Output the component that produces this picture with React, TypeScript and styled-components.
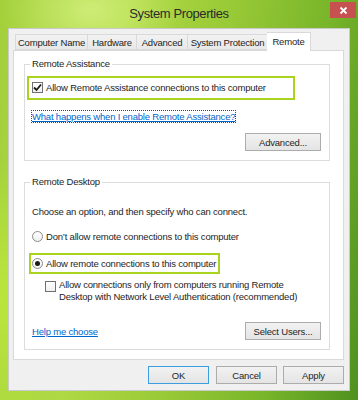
import React from "react";
import styled, { createGlobalStyle } from "styled-components";

const GlobalStyle = createGlobalStyle`
  html, body {
    margin: 0;
    padding: 0;
    font-family: "Liberation Sans", Arial, sans-serif;
    font-size: 9.5px;
    letter-spacing: -0.2px;
    color: #1e1e1e;
  }
`;

const Desktop = styled.div`
  width: 358px;
  height: 400px;
  box-sizing: border-box;
  padding: 0 8px 9px 8px;
  display: flex;
  flex-direction: column;
  background:
    radial-gradient(ellipse 90px 60px at 90px 10px, rgba(220, 245, 140, 0.7), transparent),
    radial-gradient(ellipse 60px 140px at 0px 300px, rgba(190, 235, 60, 0.8), transparent),
    linear-gradient(100deg, #a2d03a 0%, #b0da45 30%, #98c936 55%, #78b52a 78%, #4f9120 100%);
`;

const TitleBar = styled.div`
  height: 28px;
  display: grid;
  grid-template-columns: 1fr auto 1fr;
  align-items: start;
`;

const Title = styled.div`
  grid-column: 2;
  margin-top: 6px;
  font-size: 13px;
  letter-spacing: -0.4px;
  color: #2b2b2b;
`;

const CloseButton = styled.div`
  grid-column: 3;
  justify-self: end;
  margin-top: 2px;
  margin-right: -6px;
  width: 26px;
  height: 16px;
  background: #c75050;
  display: flex;
  align-items: center;
  justify-content: center;
`;

const Client = styled.div`
  flex: 1;
  background: #f0f0f0;
  border: 1px solid #c9c9c9;
  padding: 3px 5px 0 4px;
  display: flex;
  flex-direction: column;
`;

const TabRow = styled.div`
  display: flex;
  align-items: flex-end;
  padding-left: 2px;
  height: 18px;
  position: relative;
  z-index: 1;
`;

const Tab = styled.div<{ $active?: boolean; $w: number }>`
  width: ${(p) => p.$w}px;
  box-sizing: border-box;
  height: ${(p) => (p.$active ? 19 : 16)}px;
  margin-bottom: ${(p) => (p.$active ? -1 : 0)}px;
  border: 1px solid #d9d9d9;
  border-bottom: ${(p) => (p.$active ? "none" : "1px solid #d9d9d9")};
  margin-left: ${(p) => (p.$active ? -1 : 0)}px;
  background: ${(p) => (p.$active ? "#ffffff" : "linear-gradient(#f2f2f2, #e8e8e8)")};
  display: flex;
  align-items: ${(p) => (p.$active ? "flex-start" : "center")};
  padding-top: ${(p) => (p.$active ? 3 : 0)}px;
  justify-content: center;
  white-space: nowrap;
  & + & {
    border-left: none;
  }
`;

const Panel = styled.div`
  height: 310px;
  box-sizing: border-box;
  background: #ffffff;
  border: 1px solid #d9d9d9;
  padding: 6px 13px 0 10px;
`;

const Group = styled.fieldset`
  margin: 0 0 14px 0;
  padding: 5px 8px 9px 7px;
  border: 1px solid #dcdcdc;
  min-width: 0;
`;

const Legend = styled.legend`
  padding: 0 2px;
  margin-left: -2px;
  line-height: 14px;
`;

const Highlight = styled.div<{ $w: number; $h: number; $pad: number }>`
  width: ${(p) => p.$w}px;
  height: ${(p) => p.$h}px;
  box-sizing: border-box;
  border: 2px solid #a8d41e;
  margin-left: ${(p) => -2 - p.$pad}px;
  padding-left: ${(p) => p.$pad}px;
  display: flex;
  align-items: center;
`;

const OptionRow = styled.div<{ $indent?: number; $top?: number }>`
  display: flex;
  align-items: flex-start;
  gap: 3px;
  margin-left: ${(p) => p.$indent ?? 0}px;
  margin-top: ${(p) => p.$top ?? 0}px;
  line-height: 14px;
  white-space: nowrap;
`;

const Box = styled.span<{ $round?: boolean }>`
  flex: none;
  width: 11px;
  height: 11px;
  box-sizing: border-box;
  border: 1px solid ${(p) => (p.$round ? "#8c8c8c" : "#707070")};
  border-radius: ${(p) => (p.$round ? "50%" : "0")};
  background: linear-gradient(#ffffff, #f0f0f0);
  display: flex;
  align-items: center;
  justify-content: center;
  margin-top: 1px;
`;

const Dot = styled.span`
  width: 5px;
  height: 5px;
  border-radius: 50%;
  background: #1a1a1a;
`;

const Text = styled.div<{ $top?: number }>`
  line-height: 14px;
  margin-top: ${(p) => p.$top ?? 0}px;
`;

const TwoLines = styled.div`
  line-height: 12px;
  margin-top: -1px;
`;

const Link = styled.a<{ $focus?: boolean }>`
  color: #0066cc;
  text-decoration: underline;
  line-height: 13px;
  outline: ${(p) => (p.$focus ? "1px dotted #444" : "none")};
`;

const LinkLine = styled.div<{ $top: number }>`
  margin-top: ${(p) => p.$top}px;
  line-height: 14px;
`;

const ButtonRight = styled.div<{ $top: number }>`
  display: flex;
  justify-content: flex-end;
  margin-top: ${(p) => p.$top}px;
`;

const SplitRow = styled.div`
  display: flex;
  justify-content: space-between;
  align-items: center;
  margin-top: 19px;
`;

const Button = styled.button<{ $w: number; $default?: boolean }>`
  width: ${(p) => p.$w}px;
  height: 18px;
  padding: 0;
  font: inherit;
  letter-spacing: inherit;
  color: #1e1e1e;
  border: 1px solid ${(p) => (p.$default ? "#3c9de0" : "#acacac")};
  background: linear-gradient(#f2f2f2, #e4e4e4);
`;

const Footer = styled.div`
  display: flex;
  justify-content: flex-end;
  gap: 7px;
  margin-top: 6px;
  padding-right: 0;
`;

const tabs = [
  { label: "Computer Name", w: 73 },
  { label: "Hardware", w: 49 },
  { label: "Advanced", w: 51 },
  { label: "System Protection", w: 80 },
  { label: "Remote", w: 44, active: true },
];

const Check = () => (
  <svg width="9" height="9" viewBox="0 0 9 9">
    <path d="M1 4.5 L3.5 7 L8 1.5" fill="none" stroke="#1a1a1a" strokeWidth="1.8" />
  </svg>
);

const App: React.FC = () => {
  return (
    <>
      <GlobalStyle />
      <Desktop>
        <TitleBar>
          <Title>System Properties</Title>
          <CloseButton>
            <svg width="9" height="9" viewBox="0 0 9 9">
              <path d="M1.5 1.5 L7.5 7.5 M7.5 1.5 L1.5 7.5" stroke="#fff" strokeWidth="1.8" />
            </svg>
          </CloseButton>
        </TitleBar>
        <Client>
          <TabRow>
            {tabs.map((t) => (
              <Tab key={t.label} $w={t.w} $active={t.active}>
                {t.label}
              </Tab>
            ))}
          </TabRow>
          <Panel>
            <Group>
              <Legend>Remote Assistance</Legend>
              <Highlight $w={268} $h={24} $pad={3}>
                <OptionRow>
                  <Box>
                    <Check />
                  </Box>
                  <span>Allow Remote Assistance connections to this computer</span>
                </OptionRow>
              </Highlight>
              <LinkLine $top={10}>
                <Link $focus>What happens when I enable Remote Assistance?</Link>
              </LinkLine>
              <ButtonRight $top={9}>
                <Button $w={76}>Advanced...</Button>
              </ButtonRight>
            </Group>
            <Group>
              <Legend>Remote Desktop</Legend>
              <Text $top={11}>Choose an option, and then specify who can connect.</Text>
              <OptionRow $top={11}>
                <Box $round />
                <span>Don’t allow remote connections to this computer</span>
              </OptionRow>
              <Highlight $w={191} $h={21} $pad={1} style={{ marginTop: 9 }}>
                <OptionRow>
                  <Box $round>
                    <Dot />
                  </Box>
                  <span>Allow remote connections to this computer</span>
                </OptionRow>
              </Highlight>
              <OptionRow $indent={13} $top={6}>
                <Box />
                <TwoLines>
                  Allow connections only from computers running Remote
                  <br />
                  Desktop with Network Level Authentication (recommended)
                </TwoLines>
              </OptionRow>
              <SplitRow>
                <Link>Help me choose</Link>
                <Button $w={76}>Select Users...</Button>
              </SplitRow>
            </Group>
          </Panel>
          <Footer>
            <Button $w={61} $default>
              OK
            </Button>
            <Button $w={61}>Cancel</Button>
            <Button $w={61} style={{ marginLeft: -1 }}>
              Apply
            </Button>
          </Footer>
        </Client>
      </Desktop>
    </>
  );
};

export default App;
